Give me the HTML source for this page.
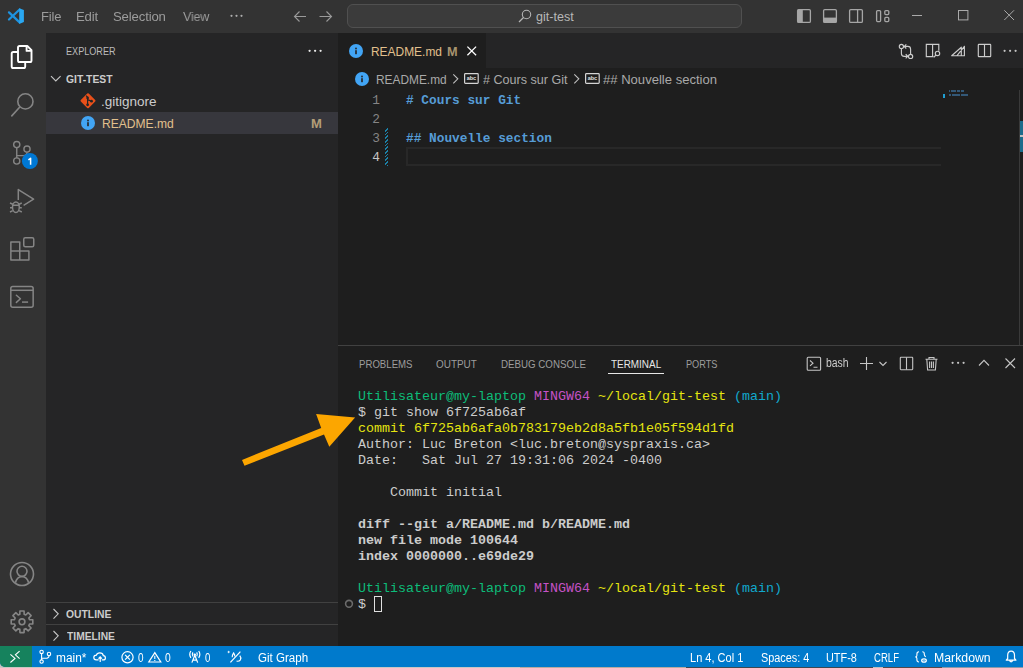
<!DOCTYPE html>
<html><head><meta charset="utf-8">
<style>
*{margin:0;padding:0;box-sizing:border-box}
html,body{width:1023px;height:668px;overflow:hidden;background:#c6c0bc}
body{position:relative;font-family:"Liberation Sans",sans-serif;-webkit-font-smoothing:antialiased}
.a{position:absolute}
.t{position:absolute;white-space:pre;line-height:1}
svg{position:absolute;overflow:visible}
#title{left:0;top:0;width:1023px;height:33px;background:#333333}
#act{left:0;top:33px;width:46px;height:613px;background:#333333}
#side{left:46px;top:33px;width:292px;height:613px;background:#252526}
#editor{left:338px;top:33px;width:685px;height:312px;background:#1e1e1e}
#tabs{left:338px;top:33px;width:685px;height:35px;background:#252526}
#tab{left:338px;top:33px;width:148px;height:35px;background:#1e1e1e}
#panel{left:338px;top:345px;width:685px;height:301px;background:#1e1e1e;border-top:1px solid #414141}
#status{left:0;top:646px;width:1023px;height:21px;background:#007acc;border-bottom-left-radius:5px}
#remote{left:0;top:646px;width:32px;height:21px;background:#16825d;border-bottom-left-radius:5px}
.menu{will-change:transform;font-size:13px;color:#9c9c9c;top:10px;letter-spacing:-0.15px}
.mono{font-family:"Liberation Mono",monospace}
.term{font-family:"Liberation Mono",monospace;font-size:13.33px;line-height:16px;position:absolute;margin-top:1px;left:358px;white-space:pre;color:#cccccc}
.sb{font-size:12px;color:#ffffff;top:650px}
.bc{font-size:13px;color:#a9a9a9}
.ln{position:absolute;margin-top:1px;left:360px;width:20px;text-align:right;font-family:"Liberation Mono",monospace;font-size:12.8px;line-height:19px;color:#858585;white-space:pre}
.code{position:absolute;margin-top:1px;left:406px;font-family:"Liberation Mono",monospace;font-size:12.8px;line-height:19px;color:#569cd6;font-weight:bold;white-space:pre}
.pt{font-size:11px;color:#9d9d9d}
.mm{height:2px;background:#335877}
</style></head><body>
<div id="title" class="a"></div>
<div id="act" class="a"></div>
<div id="side" class="a"></div>
<div id="editor" class="a"></div>
<div id="tabs" class="a"></div>
<div id="tab" class="a"></div>
<div id="panel" class="a"></div>
<div class="a" style="left:0;top:667px;width:1023px;height:1px;background:linear-gradient(90deg,#cbc6c3 0,#cbc6c3 520px,#b9aaa0 520px,#b9aaa0 686px,#3d4852 686px,#3d4852 873px,#c0c0c0 873px,#c0c0c0 883px,#54484a 883px,#54484a 942px,#8a9aaa 942px)"></div>
<div id="status" class="a"></div>
<div id="remote" class="a"></div>

<!-- title bar -->
<svg style="left:8px;top:8px" width="16" height="16" viewBox="0 0 16 16">
  <path d="M1 4.4L11.6 14.3M1 11.5L11.6 1.5" stroke="#1e93e0" stroke-width="2.3" stroke-linecap="round"/>
  <path d="M11.2 0.2L15.9 2V14L11.2 15.9Z" fill="#2aa8f2"/>
</svg>
<div id="m1" class="t menu" style="left:40.51px;top:10.00px;transform:scaleX(0.9947);transform-origin:0 0">File</div>
<div id="m2" class="t menu" style="left:75.89px;top:10.00px;transform:scaleX(1.0095);transform-origin:0 0">Edit</div>
<div id="m3" class="t menu" style="left:113.39px;top:10.00px;transform:scaleX(1.0118);transform-origin:0 0">Selection</div>
<div id="m4" class="t menu" style="left:182.60px;top:10.00px;transform:scaleX(0.9607);transform-origin:0 0">View</div>
<svg style="left:230px;top:14px" width="14" height="4"><circle cx="1.5" cy="1.8" r="1.1" fill="#adadad"/><circle cx="6.5" cy="1.8" r="1.1" fill="#adadad"/><circle cx="11.5" cy="1.8" r="1.1" fill="#adadad"/></svg>
<svg style="left:293px;top:10px" width="14" height="13" viewBox="0 0 14 13"><path d="M13 6.5H1.5M6.5 1.5L1.5 6.5L6.5 11.5" stroke="#9a9a9a" stroke-width="1.1" fill="none"/></svg>
<svg style="left:319px;top:10px" width="14" height="13" viewBox="0 0 14 13"><path d="M0.5 6.5H12.5M7.5 1.5L12.5 6.5L7.5 11.5" stroke="#9a9a9a" stroke-width="1.1" fill="none"/></svg>
<div class="a" style="left:347px;top:4px;width:395px;height:24px;border-radius:6px;background:#3b3b3b;border:1px solid #505050"></div>
<svg style="left:518px;top:9px" width="14" height="14" viewBox="0 0 14 14"><circle cx="8.5" cy="5.5" r="4.2" stroke="#b5b5b5" stroke-width="1.1" fill="none"/><path d="M5.5 8.5L1 13" stroke="#b5b5b5" stroke-width="1.2"/></svg>
<div id="srch" class="t" style="left:536.20px;top:11.00px;transform:scaleX(1.0459);transform-origin:0 0;font-size:12px;color:#b8b8b8">git-test</div>
<!-- layout icons -->
<svg style="left:0;top:0" width="1023" height="33" fill="none" stroke="#a6a6a6" stroke-width="1.3">
 <rect x="797.6" y="9.6" width="12.8" height="12.8" rx="1.2"/><rect x="797.6" y="9.6" width="5.2" height="12.8" fill="#a6a6a6" stroke="none"/>
 <rect x="823.6" y="9.6" width="12.8" height="12.8" rx="1.2"/><rect x="823.6" y="17.6" width="12.8" height="4.8" fill="#a6a6a6" stroke="none"/>
 <rect x="849.6" y="9.6" width="12.8" height="12.8" rx="1.2"/><path d="M857.6 9.6V22.4"/>
 <rect x="876.6" y="10.6" width="4" height="11" rx="1"/><rect x="884.8" y="10.6" width="4" height="4" rx="1"/><rect x="884.8" y="17.4" width="4" height="4.2" rx="1"/>
</svg>
<!-- window controls -->
<svg style="left:911px;top:10px" width="12" height="12"><path d="M1 5.5H11" stroke="#aaa" stroke-width="1"/></svg>
<svg style="left:958px;top:10px" width="11" height="11"><rect x="0.5" y="0.5" width="9.4" height="9.4" stroke="#aaa" fill="none"/></svg>
<svg style="left:1004px;top:10px" width="11" height="11"><path d="M0.3 0.3L10 10M10 0.3L0.3 10" stroke="#aaa" stroke-width="1"/></svg>


<!-- activity bar icons -->
<svg style="left:0;top:0" width="46" height="668" fill="none" stroke-linejoin="round">
 <g stroke="#ffffff" stroke-width="1.9">
  <path d="M18 47.6Q18 46 19.6 46H27.3L31.5 50.2V60.4Q31.5 62 29.9 62H19.6Q18 62 18 60.4Z"/>
  <path d="M26.6 46.3V50.9H31.2"/>
  <path d="M18 52H13.3Q11.7 52 11.7 53.6V66.4Q11.7 68 13.3 68H23.6Q25.2 68 25.2 66.4V62.6"/>
 </g>
 <g stroke="#858585" stroke-width="1.6">
  <circle cx="25.4" cy="101.4" r="7.6"/>
  <path d="M19.6 107.2L11.8 115.9" stroke-linecap="round"/>
 </g>
 <g stroke="#858585" stroke-width="1.4">
  <circle cx="16.75" cy="144.6" r="3.1"/>
  <circle cx="27" cy="149.1" r="3.1"/>
  <circle cx="16.75" cy="161" r="3.1"/>
  <path d="M16.75 147.7V157.9M16.75 155.6H23.5Q27 155.6 27 152.2"/>
 </g>
 <circle cx="29.9" cy="161" r="8" fill="#0078d4"/>
 <path d="M30.6 164.8V158.3L28.4 159.8" stroke="#fff" stroke-width="1.5" stroke-linejoin="round"/>
 <g stroke="#858585" stroke-width="1.5">
  <path d="M18.3 199.9V189.6L33.6 199.2L23.6 205.4"/>
  <ellipse cx="15.9" cy="207.2" rx="3.4" ry="5.2"/>
  <path d="M12.6 205.2H19.2M10 203L12.8 204.2M10 207.7H12.6M10 212L12.8 210.6M21.8 203L19 204.2M21.8 207.7H19.2M21.8 212L19 210.6"/>
 </g>
 <g stroke="#858585" stroke-width="1.5">
  <path d="M10.85 242H19.75V251H28.9V260H10.85Z M19.75 251V260 M10.85 251H19.75"/>
  <rect x="23.75" y="237.85" width="10" height="8.9" rx="1.5"/>
 </g>
 <g stroke="#858585" stroke-width="1.5">
  <rect x="10.8" y="286.6" width="22.35" height="20.65" rx="2"/>
  <path d="M10.8 290.3H33.15"/>
  <path d="M16.4 295.3L20.4 298.8L16.4 302.4" stroke-linecap="round"/>
  <path d="M22 302.1H28.1"/>
 </g>
 <g stroke="#858585" stroke-width="1.6">
  <circle cx="22" cy="574" r="11.5"/>
  <circle cx="22" cy="571.3" r="5"/>
  <path d="M15.4 582.8Q17 576.6 22 576.5Q27 576.6 28.6 582.8"/>
 </g>
 <g stroke="#858585" stroke-width="1.6">
  <path d="M19.84 614.30 L19.92 611.00 L24.08 611.00 L24.16 614.30 L25.78 614.98 L28.17 612.69 L31.11 615.63 L28.82 618.02 L29.50 619.64 L32.80 619.72 L32.80 623.88 L29.50 623.96 L28.82 625.58 L31.11 627.97 L28.17 630.91 L25.78 628.62 L24.16 629.30 L24.08 632.60 L19.92 632.60 L19.84 629.30 L18.22 628.62 L15.83 630.91 L12.89 627.97 L15.18 625.58 L14.50 623.96 L11.20 623.88 L11.20 619.72 L14.50 619.64 L15.18 618.02 L12.89 615.63 L15.83 612.69 L18.22 614.98Z"/>
  <circle cx="22" cy="621.8" r="2.9"/>
 </g>
</svg>


<!-- sidebar -->
<div id="sx" class="t" style="left:66.30px;top:46.00px;transform:scaleX(0.8267);transform-origin:0 0;font-size:11px;color:#bbbbbb">EXPLORER</div>
<svg style="left:308px;top:49px" width="15" height="4"><circle cx="1.6" cy="1.8" r="1.15" fill="#e8e8e8"/><circle cx="7.1" cy="1.8" r="1.15" fill="#e8e8e8"/><circle cx="12.6" cy="1.8" r="1.15" fill="#e8e8e8"/></svg>
<svg style="left:50px;top:75px" width="12" height="8"><path d="M1 1.2L5.8 6L10.6 1.2" stroke="#c5c5c5" stroke-width="1.1" fill="none"/></svg>
<div id="sg" class="t" style="left:66.00px;top:74.00px;transform:scaleX(0.9400);transform-origin:0 0;font-size:11px;font-weight:bold;color:#cccccc">GIT-TEST</div>
<svg style="left:76px;top:90px" width="24" height="22" viewBox="0 0 24 22">
 <path d="M12 4.4L18.4 10.8L12 17.2L5.6 10.8Z" fill="#e8501a" stroke="#e8501a" stroke-width="2.2" stroke-linejoin="round"/>
 <path d="M10.2 5.6L11.6 7.4V14.7M11.6 9.6L15.4 11.2" stroke="#252526" stroke-width="1.2" fill="none"/>
 <circle cx="11.6" cy="7.9" r="1.3" fill="#252526"/><circle cx="11.6" cy="14.8" r="1.4" fill="#252526"/><circle cx="15.5" cy="11.2" r="1.4" fill="#252526"/>
</svg>
<div id="sf1" class="t" style="left:100.96px;top:95.00px;transform:scaleX(1.0377);transform-origin:0 0;font-size:13px;color:#cccccc">.gitignore</div>
<div class="a" style="left:46px;top:112px;width:292px;height:22px;background:#37373d"></div>
<svg style="left:81px;top:116px" width="14" height="14" viewBox="0 0 14 14">
 <circle cx="7" cy="7" r="7" fill="#42a5f5"/>
 <rect x="6.05" y="6.2" width="1.9" height="4" fill="#2a3540"/><circle cx="7" cy="4.5" r="1.05" fill="#2a3540"/>
</svg>
<div id="sf2" class="t" style="left:102.00px;top:117.00px;transform:scaleX(0.9286);transform-origin:0 0;font-size:13px;color:#e2c08d">README.md</div>
<div id="sm" class="t" style="left:311.40px;top:118.00px;transform:scaleX(1.0900);transform-origin:0 0;font-size:12px;font-weight:bold;color:#b39d77">M</div>
<div class="a" style="left:46px;top:602px;width:292px;height:1px;background:#414141"></div>
<div class="a" style="left:46px;top:624px;width:292px;height:1px;background:#414141"></div>
<svg style="left:52px;top:608px" width="8" height="12"><path d="M1.5 1L6.2 5.8L1.5 10.6" stroke="#c5c5c5" stroke-width="1.1" fill="none"/></svg>
<svg style="left:52px;top:630px" width="8" height="12"><path d="M1.5 1L6.2 5.8L1.5 10.6" stroke="#c5c5c5" stroke-width="1.1" fill="none"/></svg>
<div id="so" class="t" style="left:66.20px;top:609.00px;transform:scaleX(0.9408);transform-origin:0 0;font-size:11px;font-weight:bold;color:#cccccc">OUTLINE</div>
<div id="st" class="t" style="left:67.43px;top:631.00px;transform:scaleX(0.9340);transform-origin:0 0;font-size:11px;font-weight:bold;color:#cccccc">TIMELINE</div>

<!-- editor tab -->
<svg style="left:349px;top:44px" width="14" height="14" viewBox="0 0 14 14">
 <circle cx="7" cy="7" r="7" fill="#42a5f5"/>
 <rect x="6.05" y="6.2" width="1.9" height="4" fill="#2a3540"/><circle cx="7" cy="4.5" r="1.05" fill="#2a3540"/>
</svg>
<div id="tb" class="t" style="left:370.50px;top:45.00px;transform:scaleX(0.9182);transform-origin:0 0;font-size:13px;color:#e2c08d">README.md</div>
<div id="tm" class="t" style="left:447.00px;top:46.00px;transform:scaleX(1.0600);transform-origin:0 0;font-size:12px;font-weight:bold;color:#a8946f">M</div>
<svg style="left:466px;top:45px" width="12" height="12"><path d="M1.4 1.6L10.1 10.3M10.1 1.6L1.4 10.3" stroke="#ffffff" stroke-width="1.3"/></svg>
<!-- breadcrumbs -->
<svg style="left:355px;top:72px" width="14" height="14" viewBox="0 0 14 14">
 <circle cx="7" cy="7" r="7" fill="#42a5f5"/>
 <rect x="6.05" y="6.2" width="1.9" height="4" fill="#2a3540"/><circle cx="7" cy="4.5" r="1.05" fill="#2a3540"/>
</svg>
<div id="b1" class="t bc" style="left:376.30px;top:73.00px;transform:scaleX(0.9143);transform-origin:0 0">README.md</div>
<svg style="left:452px;top:73px" width="8" height="12"><path d="M1.3 1.3L5.8 5.8L1.3 10.3" stroke="#c0c0c0" stroke-width="1.1" fill="none"/></svg>
<svg style="left:464px;top:73px" width="15" height="11"><rect x="0.6" y="0.6" width="13.6" height="9.8" rx="0.8" stroke="#d4d4d4" stroke-width="1.2" fill="none"/><text x="7.4" y="7.4" font-size="5.5" font-weight="bold" fill="#e0e0e0" text-anchor="middle" font-family="Liberation Sans">abc</text></svg>
<div id="b2" class="t bc" style="left:482.70px;top:73.00px;transform:scaleX(0.9670);transform-origin:0 0"># Cours sur Git</div>
<svg style="left:573px;top:73px" width="8" height="12"><path d="M1.3 1.3L5.8 5.8L1.3 10.3" stroke="#c0c0c0" stroke-width="1.1" fill="none"/></svg>
<svg style="left:585px;top:73px" width="15" height="11"><rect x="0.6" y="0.6" width="13.6" height="9.8" rx="0.8" stroke="#d4d4d4" stroke-width="1.2" fill="none"/><text x="7.4" y="7.4" font-size="5.5" font-weight="bold" fill="#e0e0e0" text-anchor="middle" font-family="Liberation Sans">abc</text></svg>
<div id="b3" class="t bc" style="left:603.40px;top:73.00px;transform:scaleX(1.0053);transform-origin:0 0">## Nouvelle section</div>
<!-- code -->
<div class="a" style="left:406px;top:147px;width:535px;height:19px;border:2px solid #282828;border-right:0"></div>
<div class="a" style="left:385px;top:128px;width:3px;height:38px;background:repeating-linear-gradient(-45deg,#1b81a8 0px,#1b81a8 1.2px,#1e1e1e 1.2px,#1e1e1e 2.6px)"></div>
<div class="ln" style="top:90px">1</div>
<div class="ln" style="top:109px">2</div>
<div class="ln" style="top:128px">3</div>
<div class="ln" style="top:147px;color:#c6c6c6">4</div>
<div class="code" style="top:90px"># Cours sur Git</div>
<div class="code" style="top:128px">## Nouvelle section</div>
<!-- minimap -->
<div class="a mm" style="left:949px;top:90px;width:1px"></div>
<div class="a mm" style="left:951px;top:90px;width:5px"></div>
<div class="a mm" style="left:957px;top:90px;width:3px"></div>
<div class="a mm" style="left:961px;top:90px;width:3px"></div>
<div class="a mm" style="left:949px;top:94px;width:2px"></div>
<div class="a mm" style="left:952px;top:94px;width:8px"></div>
<div class="a mm" style="left:961px;top:94px;width:7px"></div>
<div class="a" style="left:943px;top:94px;width:2px;height:4px;background:#1f9fd2"></div>
<!-- scrollbar / overview ruler -->
<div class="a" style="left:1019px;top:90px;width:1px;height:255px;background:#3a3a3a"></div>
<div class="a" style="left:1020px;top:121px;width:3px;height:31px;background:#1b6c8c"></div>
<div class="a" style="left:1020px;top:135px;width:3px;height:2px;background:#c0c0c0"></div>
<!-- editor actions -->
<svg style="left:0;top:0" width="1023" height="70" fill="none" stroke="#cccccc" stroke-width="1.15">
 <circle cx="901.4" cy="46.4" r="2.1"/><circle cx="910.6" cy="56.4" r="2.1"/>
 <path d="M901.4 48.5V53.5Q901.4 56.3 904.2 56.3H907.8M905.7 54.2L907.8 56.3L905.7 58.4"/>
 <path d="M910.6 54.3V49.2Q910.6 46.4 907.8 46.4H904.2M906.3 44.3L904.2 46.4L906.3 48.5"/>
 <path d="M938.8 50.8V44.3H926.3V56.6H933.6M932.6 44.3V56.6"/>
 <circle cx="937.5" cy="53.4" r="2.2"/><path d="M935.9 55L933.8 57.3"/>
 <path d="M951.7 55.7L961.3 47.2V55.7ZM957 55.7L964.4 46.3V55.7H961.3" stroke-linejoin="round"/>
 <rect x="978.3" y="44.3" width="12.4" height="12.4" rx="0.6"/><path d="M984.5 44.3V56.7"/>
</svg>
<svg style="left:1003px;top:49px" width="15" height="4"><circle cx="1.6" cy="1.8" r="1.1" fill="#c5c5c5"/><circle cx="7.1" cy="1.8" r="1.1" fill="#c5c5c5"/><circle cx="12.6" cy="1.8" r="1.1" fill="#c5c5c5"/></svg>

<!-- panel tabs -->
<div id="p1" class="t pt" style="left:358.50px;top:359.00px;transform:scaleX(0.8754);transform-origin:0 0">PROBLEMS</div>
<div id="p2" class="t pt" style="left:435.80px;top:359.00px;transform:scaleX(0.9022);transform-origin:0 0">OUTPUT</div>
<div id="p3" class="t pt" style="left:501.30px;top:359.00px;transform:scaleX(0.8844);transform-origin:0 0">DEBUG CONSOLE</div>
<div id="p4" class="t pt" style="left:610.80px;top:359.00px;transform:scaleX(0.9018);transform-origin:0 0;color:#e7e7e7">TERMINAL</div>
<div class="a" style="left:608px;top:373px;width:56px;height:1px;background:#e7e7e7"></div>
<div id="p5" class="t pt" style="left:685.90px;top:359.00px;transform:scaleX(0.8342);transform-origin:0 0">PORTS</div>
<!-- panel actions -->
<svg style="left:0;top:340px" width="1023" height="40" fill="none" stroke="#c5c5c5" stroke-width="1.1">
 <rect x="807.2" y="17.2" width="13.4" height="13" rx="1"/>
 <path d="M810 20.5L813 23.2L810 25.9M813.5 27.2H817.5"/>
 <path d="M866.5 17V30M860 23.5H873"/>
 <path d="M879.5 22L883 25.5L886.5 22"/>
 <rect x="900.3" y="17.3" width="12.4" height="12.4" rx="0.6"/><path d="M906.5 17.3V29.7"/>
 <path d="M925.5 19.2H937.5M929 19.2V17.5H934V19.2M926.8 19.2L927.6 30H935.4L936.2 19.2M929.6 21.5V28M931.5 21.5V28M933.4 21.5V28"/>
 <path d="M979 25.5L984 20.3L989 25.5"/>
 <path d="M1005.5 18.5L1015 28M1015 18.5L1005.5 28"/>
</svg>
<svg style="left:951px;top:361px" width="15" height="4"><circle cx="1.6" cy="1.8" r="1.1" fill="#c5c5c5"/><circle cx="7.1" cy="1.8" r="1.1" fill="#c5c5c5"/><circle cx="12.6" cy="1.8" r="1.1" fill="#c5c5c5"/></svg>
<div id="bash" class="t" style="left:826.20px;top:357.00px;transform:scaleX(0.8692);transform-origin:0 0;font-size:12px;color:#cccccc">bash</div>
<!-- terminal -->
<div class="term" style="top:388px"><span style="color:#0dbc79">Utilisateur@my-laptop</span> <span style="color:#c552c5">MINGW64</span> <span style="color:#e5e510">~/local/git-test</span> <span style="color:#11a8cd">(main)</span>
$ git show 6f725ab6af
<span style="color:#e5e510">commit 6f725ab6afa0b783179eb2d8a5fb1e05f594d1fd</span>
Author: Luc Breton &lt;luc.breton@syspraxis.ca&gt;
Date:   Sat Jul 27 19:31:06 2024 -0400

    Commit initial

<b>diff --git a/README.md b/README.md</b>
<b>new file mode 100644</b>
<b>index 0000000..e69de29</b>

<span style="color:#0dbc79">Utilisateur@my-laptop</span> <span style="color:#c552c5">MINGW64</span> <span style="color:#e5e510">~/local/git-test</span> <span style="color:#11a8cd">(main)</span>
$ </div>
<div class="a" style="left:374px;top:596px;width:8px;height:16px;border:1px solid #e0e0e0"></div>
<svg style="left:343px;top:598px" width="12" height="12"><circle cx="6" cy="5.8" r="3.4" stroke="#6b6b6b" stroke-width="1.6" fill="none"/></svg>
<!-- arrow -->
<svg style="left:0;top:0" width="1023" height="668"><path d="M242 459.9L321.2 427.9L316.1 414.1L355.1 417.5L329.3 446.7L324 434.5L244.5 465.7Z" fill="#fca600"/></svg>
<!-- status bar -->
<svg style="left:0;top:646px" width="1023" height="21" fill="none" stroke="#ffffff" stroke-width="1.1">
 <path d="M10.4 8.3L15 12.4L10.4 16.5M19.6 5.1L15.4 8.8L19.6 12.6"/>
 <circle cx="41.6" cy="5.9" r="1.7"/><circle cx="49" cy="8" r="1.7"/><circle cx="41.6" cy="15.6" r="1.7"/>
 <path d="M41.6 7.6V13.9M41.6 12.3H45.5Q49 12.3 49 9.7"/>
 <path d="M98.6 13.9H96.2Q93.8 13.9 93.8 11.6Q93.8 9.4 96.4 9.2Q97 6.9 99.8 6.9Q102.8 6.9 103.3 9.7Q105.4 9.9 105.4 11.9Q105.4 13.9 103.2 13.9H101.8M100.2 16V10.8M98.5 12.6L100.2 10.8L101.9 12.6" stroke-width="1.2"/>
 <circle cx="127.5" cy="11.3" r="5.6" stroke-width="1.2"/><path d="M125.1 8.9L129.9 13.7M129.9 8.9L125.1 13.7" stroke-width="1.2"/>
 <path d="M154.8 6.6L160.8 16H148.8Z" stroke-width="1.2"/><path d="M154.8 9.8V13M154.8 13.9V15"/>
 <path d="M190.9 5Q188.6 8.4 190.9 11.8M192.9 6.4Q191.6 8.4 192.9 10.4M196.7 6.4Q198 8.4 196.7 10.4M198.7 5Q201 8.4 198.7 11.8" stroke-width="1.2"/>
 <path d="M191.9 16.6L194.8 9.2L197.7 16.6M192.8 14.2H196.8" stroke-width="1.2"/>
 <circle cx="194.8" cy="8.6" r="1.2" fill="#fff" stroke="none"/>
 <path d="M230.4 16.4L240.4 5.6" stroke-width="1.2"/>
 <path d="M228.7 4.4L229.2 5.5L230.3 6L229.2 6.5L228.7 7.6L228.2 6.5L227.1 6L228.2 5.5Z" fill="#fff" stroke="none"/>
 <path d="M232.2 11.3Q232.4 8.6 233.6 6.9Q234.9 8.7 234.9 10.6" stroke-width="1.1"/>
 <path d="M239.8 9.6Q241.6 11.8 240.4 13.8Q239.2 15.6 236.6 15.2" stroke-width="1.2"/>
 <path d="M919 5.8Q916.9 5.8 916.9 8V9.4Q916.9 10.9 915.3 10.9Q916.9 10.9 916.9 12.4V13.8Q916.9 16 919 16"/>
 <path d="M922.3 5.8Q924.3 5.8 924.3 7.8V8.6Q924.3 10.4 925.9 10.6"/>
 <ellipse cx="924" cy="14.5" rx="2.3" ry="1.7" stroke-width="1.3"/><circle cx="924" cy="14.5" r="0.6" fill="#fff" stroke="none"/>
 <path d="M1006.3 14.2L1007.7 12.5V9.2Q1007.7 5.1 1011.1 5.1Q1014.5 5.1 1014.5 9.2V12.5L1015.9 14.2ZM1009.6 14.6Q1011.1 17 1012.6 14.6" stroke-width="1.2" stroke-linejoin="round"/>
</svg>
<div id="s1" class="t sb" style="left:55.70px;top:652.00px;transform:scaleX(0.9935);transform-origin:0 0">main*</div>
<div id="s2" class="t sb" style="left:138.20px;top:652.00px;transform:scaleX(0.8286);transform-origin:0 0">0</div>
<div id="s3" class="t sb" style="left:165.00px;top:652.00px;transform:scaleX(0.8571);transform-origin:0 0">0</div>
<div id="s4" class="t sb" style="left:205.20px;top:652.00px;transform:scaleX(0.8000);transform-origin:0 0">0</div>
<div id="s5" class="t sb" style="left:257.70px;top:652.00px;transform:scaleX(0.9635);transform-origin:0 0">Git Graph</div>
<div id="s6" class="t sb" style="left:690.00px;top:652.00px;transform:scaleX(0.9190);transform-origin:0 0">Ln 4, Col 1</div>
<div id="s7" class="t sb" style="left:761.00px;top:652.00px;transform:scaleX(0.9056);transform-origin:0 0">Spaces: 4</div>
<div id="s8" class="t sb" style="left:826.00px;top:652.00px;transform:scaleX(0.9059);transform-origin:0 0">UTF-8</div>
<div id="s9" class="t sb" style="left:873.50px;top:652.00px;transform:scaleX(0.7969);transform-origin:0 0">CRLF</div>
<div id="s10" class="t sb" style="left:933.60px;top:652.00px;transform:scaleX(1.0236);transform-origin:0 0">Markdown</div>
</body></html>
